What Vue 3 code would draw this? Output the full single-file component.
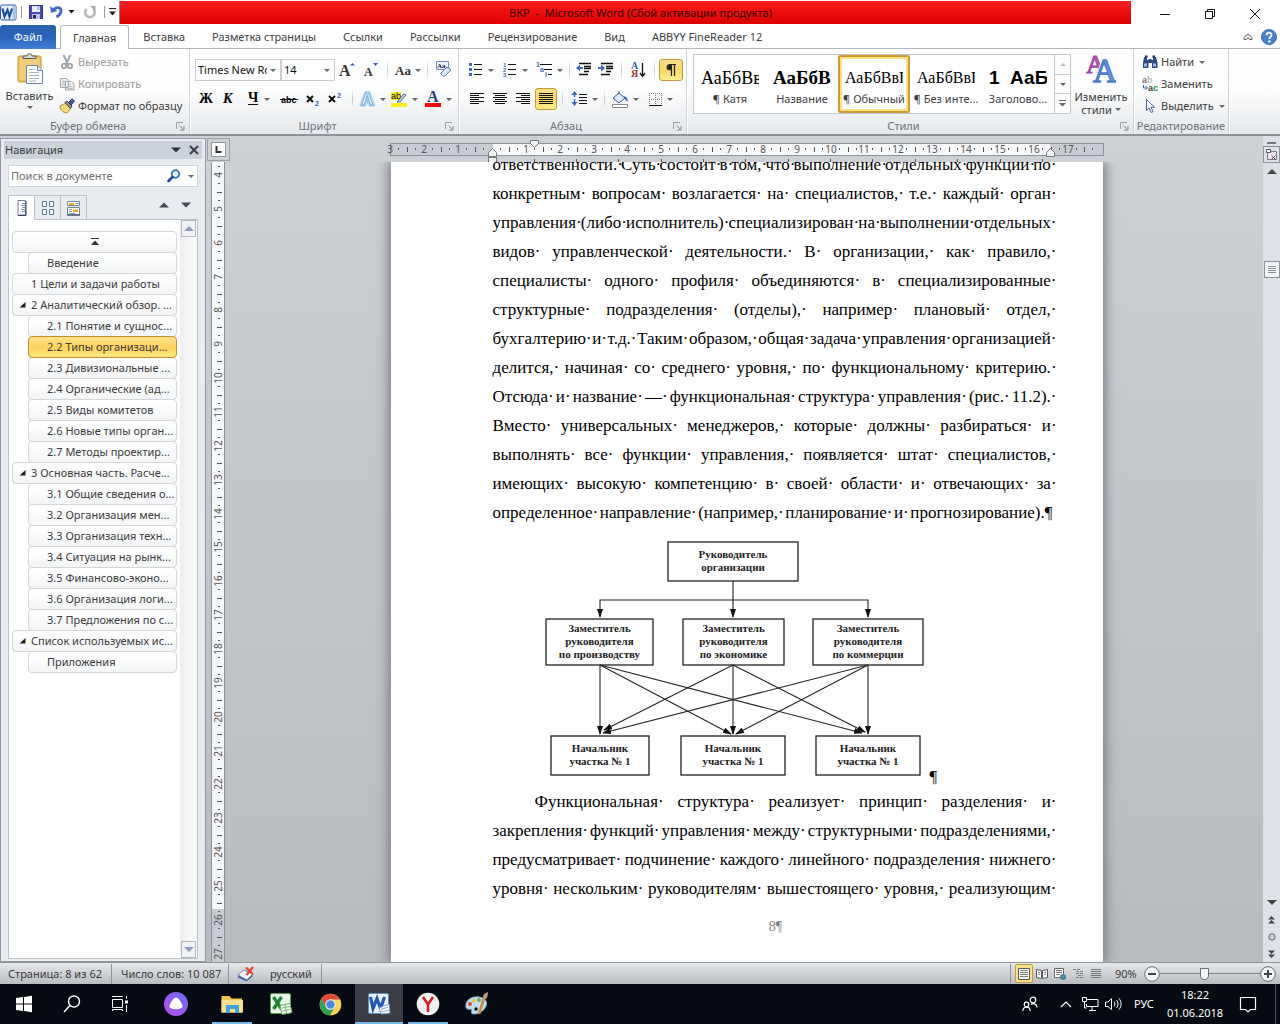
<template>
  <div class="word">
    <header class="titlebar">
      <div class="quick">
        <svg width="17" height="17" viewBox="0 0 17 17" v-html="icons.word"></svg>
        <i class="quick-sep"></i>
        <button aria-label="Сохранить"><svg width="14" height="14" viewBox="0 0 14 14" v-html="icons.save"></svg></button>
        <button class="undo" aria-label="Отменить"><svg width="26" height="14" viewBox="0 0 26 14" v-html="icons.undo"></svg></button>
        <button aria-label="Повторить"><svg width="14" height="14" viewBox="0 0 14 14" v-html="icons.redo"></svg></button>
        <i class="quick-sep end"></i>
        <button aria-label="Настройка"><svg width="7" height="8" viewBox="0 0 7 8"><path d="M0 .5h7" stroke="#222" /><path d="M0 3.500h7L3.500 7.500z" fill="#222" /></svg></button>
      </div>
      <div class="caption">ВКР&nbsp; -&nbsp; Microsoft Word (Сбой активации продукта)</div>
      <div class="window-buttons">
        <button aria-label="Свернуть"><svg width="12" height="12" viewBox="0 0 12 12"><path d="M1 6.500h10" stroke="#111" /></svg></button>
        <button aria-label="Восстановить"><svg width="12" height="12" viewBox="0 0 12 12"><path d="M1.500 3.500h7v7h-7zM3.500 3.500v-2h7v7h-2" fill="none" stroke="#111" /></svg></button>
        <button aria-label="Закрыть"><svg width="12" height="12" viewBox="0 0 12 12"><path d="M1 1l10 10M11 1L1 11" stroke="#111" /></svg></button>
      </div>
    </header>

    <nav class="tabs">
      <button class="file-tab">Файл</button>
      <button
        v-for="tab in tabs"
        :key="tab"
        class="tab"
        :class="{ current: tab === currentTab }"
        @click="currentTab = tab"
      >{{ tab }}</button>
      <span class="tabs-fill"></span>
      <button class="help" aria-label="Свернуть ленту"><svg width="10" height="8" viewBox="0 0 10 8"><path d="M1 4.500L5 1l4 3.500v2H7L5 5 3 6.500H1z" fill="#fff" stroke="#555" /></svg></button>
      <button class="help" aria-label="Справка"><svg width="16" height="16" viewBox="0 0 16 16"><circle cx="8" cy="8" r="7.500" fill="#4a80d0" stroke="#3a6cba" /><path d="M5.500 6.200c0-3.600 5.200-3.200 5 0C10.400 8 8.300 8 8.300 10" fill="none" stroke="#fff" stroke-width="1.800" /><circle cx="8.300" cy="12.400" r="1.200" fill="#fff" /></svg></button>
    </nav>

    <section class="ribbon">
      <div class="group clipboard">
        <div class="group-body">
          <button class="big paste">
            <svg width="28" height="32" viewBox="0 0 28 32" v-html="icons.paste"></svg>
            <span>Вставить</span>
            <span class="arrow"></span>
          </button>
          <div class="stack">
            <button class="off"><svg width="16" height="16" viewBox="0 0 16 16" v-html="icons.cut"></svg>Вырезать</button>
            <button class="off"><svg width="16" height="16" viewBox="0 0 16 16" v-html="icons.copy"></svg>Копировать</button>
            <button><svg width="16" height="16" viewBox="0 0 16 16" v-html="icons.brush"></svg>Формат по образцу</button>
          </div>
        </div>
        <div class="group-name"><span>Буфер обмена</span><svg width="9" height="9" viewBox="0 0 9 9" v-html="icons.launcher"></svg></div>
      </div>

      <div class="group font">
        <div class="group-body rows">
          <div class="row">
            <span class="combo family"><select aria-label="Шрифт"><option>Times New Roman</option></select><span class="arrow"></span></span>
            <span class="combo size"><select aria-label="Размер шрифта"><option>14</option></select><span class="arrow"></span></span>
            <ToolRow :items="fontTop" />
          </div>
          <div class="row"><ToolRow :items="fontBottom" /></div>
        </div>
        <div class="group-name"><span>Шрифт</span><svg width="9" height="9" viewBox="0 0 9 9" v-html="icons.launcher"></svg></div>
      </div>

      <div class="group paragraph">
        <div class="group-body rows">
          <div class="row"><ToolRow :items="paraTop" /></div>
          <div class="row"><ToolRow :items="paraBottom" /></div>
        </div>
        <div class="group-name"><span>Абзац</span><svg width="9" height="9" viewBox="0 0 9 9" v-html="icons.launcher"></svg></div>
      </div>

      <div class="group styles">
        <div class="group-body">
          <div class="gallery">
            <button v-for="s in styles" :key="s.name" class="style" :class="[s.kind, { picked: s.picked }]">
              <span class="sample">{{ s.sample }}</span>
              <span class="style-name">{{ s.name }}</span>
            </button>
            <div class="gallery-scroll">
              <button aria-label="Вверх"><span class="arrow up pale"></span></button>
              <button aria-label="Вниз"><span class="arrow"></span></button>
              <button aria-label="Все стили"><svg width="7" height="7" viewBox="0 0 7 7"><path d="M0 .5h7" stroke="#666" /><path d="M0 3h7L3.500 6.500z" fill="#666" /></svg></button>
            </div>
          </div>
          <button class="big change">
            <svg width="30" height="30" viewBox="0 0 30 30" v-html="icons.change"></svg>
            <span>Изменить</span>
            <span class="with-arrow">стили <span class="arrow"></span></span>
          </button>
        </div>
        <div class="group-name"><span>Стили</span><svg width="9" height="9" viewBox="0 0 9 9" v-html="icons.launcher"></svg></div>
      </div>

      <div class="group editing">
        <div class="group-body">
          <div class="stack">
            <button><svg width="16" height="16" viewBox="0 0 16 16" v-html="icons.find"></svg>Найти<span class="arrow"></span></button>
            <button><svg width="16" height="16" viewBox="0 0 16 16" v-html="icons.replace"></svg>Заменить</button>
            <button><svg width="16" height="16" viewBox="0 0 16 16" v-html="icons.select"></svg>Выделить<span class="arrow"></span></button>
          </div>
        </div>
        <div class="group-name"><span>Редактирование</span></div>
      </div>
    </section>

    <main class="workspace">
      <aside class="navigation">
        <div class="nav-title">
          <span>Навигация</span>
          <svg width="30" height="10" viewBox="0 0 30 10"><path d="M1 2.500h10L6 7.500z" fill="#333" /><path d="M20 1l8 8M28 1l-8 8" stroke="#444" stroke-width="2.200" /></svg>
        </div>
        <div class="search">
          <input type="text" placeholder="Поиск в документе" aria-label="Поиск в документе" />
          <svg width="14" height="14" viewBox="0 0 14 14"><circle cx="8.500" cy="5" r="3.800" fill="#e4f1fb" stroke="#2f74bd" stroke-width="1.800" /><path d="M5.500 8L1.500 12" stroke="#224f93" stroke-width="2.600" stroke-linecap="round" /></svg>
          <span class="arrow"></span>
        </div>
        <div class="nav-tabs">
          <button class="active" aria-label="Заголовки"><svg width="12" height="16" viewBox="0 0 12 16"><path d="M2 .5h7.500v14.500H2z" fill="#fff" stroke="#6a7f9f" /><path d="M10 1v14.500H2" stroke="#2f4468" fill="none" /><path d="M6 3.500h3M5 5.500h4M6 7.500h3M5 9.500h4M6 11.500h3" stroke="#8894a6" /></svg></button>
          <button aria-label="Страницы"><svg width="14" height="16" viewBox="0 0 14 16"><path d="M1.500 1.500h4v5h-4zM8.500 1.500h4v5h-4zM1.500 9.500h4v5h-4zM8.500 9.500h4v5h-4z" fill="#fff" stroke="#56749c" /></svg></button>
          <button aria-label="Результаты"><svg width="14" height="16" viewBox="0 0 14 16"><path d="M.5 1.500h12v4H.5zM.5 7.500h12v7H.5z" fill="#fff" stroke="#7286a5" /><path d="M2 3h5v2H2zM6 9.500h5V12H6z" fill="#efa91c" /><path d="M8 3.500h4M2 9.500h3M2 11.500h3M2 13.500h6" stroke="#8b9ab2" /><path d="M0 15.200h13" stroke="#2f4468" /></svg></button>
          <span class="nav-arrows"><svg width="34" height="8" viewBox="0 0 34 8"><path d="M1 6.500h10L6 1.500zM23 1.500h10L28 6.500z" fill="#444b55" /></svg></span>
        </div>
        <div class="nav-list">
          <ul>
            <li class="outline top"><svg width="8" height="8" viewBox="0 0 8 8"><path d="M0 .5h8" stroke="#333" /><path d="M0 7h8L4 2.500z" fill="#333" /></svg></li>
            <li
              v-for="h in headings"
              :key="h.text"
              class="outline"
              :class="{ sub: h.level === 2, here: h.here }"
            >
              <span class="toggle"><svg v-if="h.open" width="7" height="6" viewBox="0 0 7 6"><path d="M6.500 0v5.500H.5z" fill="#222" /></svg></span>
              <span>{{ h.text }}</span>
            </li>
          </ul>
          <div class="nav-scroll">
            <button aria-label="Вверх"><span class="arrow up blue"></span></button>
            <button aria-label="Вниз"><span class="arrow blue"></span></button>
          </div>
        </div>
      </aside>

      <div class="vruler">
        <div class="tab-kind"><svg width="15" height="15" viewBox="0 0 15 15"><path d="M.5.5h14v14H.5z" fill="#fff" stroke="#8c9299" /><path d="M5.500 4v6h5" fill="none" stroke="#333" stroke-width="2" /></svg></div>
        <div class="vscale">
          <svg width="12" height="800" viewBox="0 0 12 800">
            <rect y="747" width="12" height="53" fill="#c8ccd2" />
            <g v-for="n in 24" :key="n">
              <text :transform="`translate(10 ${vpos(n)}) rotate(-90)`" text-anchor="middle">{{ n + 3 }}</text>
              <path :d="`M6 ${vpos(n) + 8.5}h2M5 ${vpos(n) + 17.5}h5M6 ${vpos(n) + 25.5}h2`" />
            </g>
            <path d="M6 4.500h2" />
          </svg>
        </div>
      </div>

      <div class="document">
        <div class="hruler">
          <svg width="714" height="26" viewBox="0 0 714 26">
            <rect x=".5" y="7.500" width="713" height="12" fill="#c8ccd2" stroke="#8c9299" />
            <rect x="103" y="8" width="557" height="11" fill="#f6f7f8" />
            <g v-for="n in marks" :key="n">
              <text v-if="n" :x="hpos(n)" y="17" text-anchor="middle">{{ Math.abs(n) }}</text>
              <path v-if="n < 17" :d="`M${hpos(n) + 8.5} 12v2M${hpos(n) + 17.5} 11v5M${hpos(n) + 25.5} 12v2`" />
            </g>
            <path d="M686.500 12v2M694.500 11v5M702.500 12v2M144.500 23v3M186.500 23v3M228.500 23v3M271.500 23v3M313.500 23v3M355.500 23v3M398.500 23v3M440.500 23v3M482.500 23v3M525.500 23v3M567.500 23v3M610.500 23v3M652.500 23v3" />
            <path class="marker" d="M140.500 4.500h8v3l-4 4-4-4z" />
            <path class="marker" d="M98.500 20.500v-4l4-4 4 4v4zM98.500 21.500h8v5h-8z" />
            <path class="marker" d="M656.500 20.500v-4l4-4 4 4v4z" />
          </svg>
        </div>
        <div class="viewport">
          <article class="page">
            <p class="para">
              <span v-for="(line, i) in firstPara" :key="i" class="line" :class="{ last: i === firstPara.length - 1 }">
                <span v-for="(part, k) in parts(line)" :key="k" :class="part === '·' ? 'dot' : 'run'">{{ part }}</span>
              </span>
            </p>
            <div class="figure">
              <svg width="400" height="254" viewBox="0 0 400 254">
                <defs>
                  <marker id="head" markerWidth="9" markerHeight="6" refX="8" refY="3" orient="auto" markerUnits="userSpaceOnUse"><path d="M0 0l9 3-9 3z" fill="#111" /></marker>
                </defs>
                <g v-for="(b, i) in boxes" :key="i">
                  <rect :x="b.x" :y="b.y" :width="b.w" :height="b.h" fill="none" stroke="#222" stroke-width="1.300" />
                  <text v-for="(t, k) in b.text" :key="k" :x="b.x + b.w / 2" :y="b.y + b.first + k * 13" text-anchor="middle">{{ t }}</text>
                </g>
                <g fill="none" stroke="#222" stroke-width="1.100">
                  <path v-for="(d, i) in arrows" :key="i" :d="d" marker-end="url(#head)" />
                </g>
              </svg>
              <span class="pilcrow">¶</span>
            </div>
            <p class="para">
              <span v-for="(line, i) in secondPara" :key="i" class="line" :class="{ indent: i === 0 }">
                <span v-for="(part, k) in parts(line)" :key="k" :class="part === '·' ? 'dot' : 'run'">{{ part }}</span>
              </span>
            </p>
            <div class="page-number">8¶</div>
          </article>
        </div>
      </div>

      <div class="vscroll">
        <i class="split"></i>
        <button class="ruler-toggle" aria-label="Линейка"><svg width="13" height="13" viewBox="0 0 13 13"><path d="M2.500 3.500h9v8h-9z" fill="#f1e3ee" stroke="#777d84" /><path d="M1.500 1.500h4v3h-4zM6.500 7.500l4 4M10.500 7.500l-4 4" fill="#fff" stroke="#555" /></svg></button>
        <button class="step" aria-label="Вверх"><span class="arrow up dark"></span></button>
        <div class="track"><i class="thumb"></i></div>
        <button class="step" aria-label="Вниз"><span class="arrow dark"></span></button>
        <button class="browse" aria-label="Предыдущая"><svg width="7" height="8" viewBox="0 0 7 8"><path d="M0 3.500L3.500 0 7 3.500zM0 7.500L3.500 4 7 7.500z" fill="#444" /></svg></button>
        <button class="browse" aria-label="Выбор объекта"><svg width="8" height="8" viewBox="0 0 8 8"><circle cx="4" cy="4" r="3.200" fill="#ccd1d7" stroke="#666" /></svg></button>
        <button class="browse" aria-label="Следующая"><svg width="7" height="8" viewBox="0 0 7 8"><path d="M0 .5h7L3.500 4zM0 4.500h7L3.500 8z" fill="#444" /></svg></button>
      </div>
    </main>

    <footer class="status">
      <span class="cell pages">Страница: 8 из 62</span>
      <span class="cell count">Число слов: 10 087</span>
      <span class="cell language">
        <svg width="18" height="16" viewBox="0 0 18 16"><path d="M1 9l6-5 9 4-6 6z" fill="#fff" stroke="#5d7fb8" /><path d="M1 9.500l8.500 4.500 6-5.500v2L9.500 15.500 1 11.500z" fill="#3d64ad" /><path d="M9 1.500l7 7M16 1L9.500 9" stroke="#e8432a" stroke-width="2.200" /></svg>
        русский
      </span>
      <span class="status-fill"></span>
      <div class="views">
        <button v-for="(v, i) in views" :key="i" :class="{ on: i === 0 }" :aria-label="v.label"><svg width="12" height="12" viewBox="0 0 12 12" v-html="v.body"></svg></button>
      </div>
      <span class="percent">90%</span>
      <button class="zoom-button" aria-label="Уменьшить"><svg width="16" height="16" viewBox="0 0 16 16"><circle cx="8" cy="8" r="7.300" fill="#f4f5f6" stroke="#666c74" /><path d="M4 8h8" stroke="#444" stroke-width="2" /></svg></button>
      <input v-model="zoom" class="zoom" type="range" min="0" max="100" aria-label="Масштаб" />
      <button class="zoom-button" aria-label="Увеличить"><svg width="16" height="16" viewBox="0 0 16 16"><circle cx="8" cy="8" r="7.300" fill="#f4f5f6" stroke="#666c74" /><path d="M4 8h8M8 4v8" stroke="#444" stroke-width="2" /></svg></button>
    </footer>

    <div class="taskbar">
      <button v-for="a in apps" :key="a.label" :class="['app', a.state, a.kind]" :aria-label="a.label">
        <svg width="24" height="24" viewBox="0 0 24 24" v-html="a.body"></svg>
      </button>
      <span class="task-fill"></span>
      <button class="tray people" aria-label="Люди"><svg width="16" height="16" viewBox="0 0 16 16" fill="none" stroke="#fff" stroke-width="1.200"><circle cx="11" cy="4" r="2.800" /><circle cx="4.500" cy="8.500" r="2.300" /><path d="M.8 15c0-5 7.400-5 7.400 0M9 8.500c3-2 6 0 6 3" /></svg></button>
      <button class="tray" aria-label="Скрытые значки"><svg width="12" height="8" viewBox="0 0 12 8"><path d="M1 7l5-5 5 5" fill="none" stroke="#fff" stroke-width="1.200" /></svg></button>
      <button class="tray" aria-label="Сеть"><svg width="17" height="14" viewBox="0 0 17 14"><path d="M5 2.500h11v7H4.500V7M10 10v3M7 13.500h7M.5.500h4v4h-4zM2.500 5v6h2" fill="none" stroke="#fff" /></svg></button>
      <button class="tray" aria-label="Громкость"><svg width="18" height="14" viewBox="0 0 18 14"><path d="M.5 5h2.500L6.500 1.500v11L3 9.500H.5zM9 4.500c1.300 1.500 1.300 3.500 0 5M11.500 3c2 2.500 2 5.500 0 8M14 1.500c2.800 3.500 2.800 7.500 0 11" fill="none" stroke="#fff" /></svg></button>
      <span class="lang">РУС</span>
      <span class="clock"><span>18:22</span><span>01.06.2018</span></span>
      <button class="tray notes" aria-label="Уведомления"><svg width="18" height="17" viewBox="0 0 18 17"><path d="M1.500 1.500h15v12h-5l-2.500 2.500L6.500 13.500h-5z" fill="none" stroke="#fff" stroke-width="1.200" /></svg></button>
      <i class="peek"></i>
    </div>
  </div>
</template>

<script setup>
import { h, ref } from 'vue'

const tabs = ['Главная', 'Вставка', 'Разметка страницы', 'Ссылки', 'Рассылки', 'Рецензирование', 'Вид', 'ABBYY FineReader 12']
const currentTab = ref('Главная')
const zoom = ref(44)

const icons = {
  word: '<rect x=".5" y="1" width="15.500" height="15" rx="1.500" fill="#e9f1fb" stroke="#2a5ca8"/><path d="M12.500 2H16v13h-3.500z" fill="#a9c6ea"/><path d="M2.500 4.500l2 8L7.500 6l2 6.500 2.500-8" fill="none" stroke="#1c509f" stroke-width="2.200"/>',
  save: '<path d="M.5.500h13v13h-13z" fill="#4a4cb5" stroke="#30318c"/><path d="M3 1h8v6H3z" fill="#e7ecfa"/><path d="M8.500 1h2v4h-2z" fill="#9ab2e5"/><path d="M3 9h8v5H3z" fill="#b9c4ea"/><path d="M4 10h3v3.500H4z" fill="#252771"/>',
  undo: '<path d="M0 1l1 7 6.500-2z" fill="#4a76d4"/><path d="M3 5.500C6 1 11.500 2 11 6.500c-.4 2.500-2 4-4.500 5.500" fill="none" stroke="#3e68c6" stroke-width="2.800"/><path d="M18.500 5h6l-3 3.500z" fill="#111"/>',
  redo: '<path d="M3.500 4C.500 8 3 12 7 12c4.500 0 6-5 3.500-8" fill="none" stroke="#b5b7bb" stroke-width="2.600"/><path d="M7 1h5.500v5.500z" fill="#a9abb0"/>',
  launcher: '<path d="M.5 7V.500H7" fill="none" stroke="#999fa8"/><path d="M3.500 3.500L7 7M4 8h4V4" fill="none" stroke="#7f858f"/>',
  paste: '<rect x="2" y="3" width="23" height="26" rx="1.500" fill="#efc062" stroke="#c8933a"/><rect x="3.500" y="5" width="20" height="22" fill="#f4cd7b"/><path d="M7 5.500V3h4c0-3 5-3 5 0h4v2.500z" fill="#d8dbe0" stroke="#555"/><path d="M10.500 12.500h11l5 5v13h-16z" fill="#fff" stroke="#6b83a9"/><path d="M21.500 12.500v5h5" fill="#dfe8f5" stroke="#6b83a9"/><path d="M13 16.500h6M13 19.500h10M13 22.500h10M13 25.500h10M13 28h7" stroke="#a5b1c4"/>',
  cut: '<path d="M4.500 1l4.500 9M11.500 1L7 10" stroke="#a2a5aa" stroke-width="2"/><circle cx="5" cy="12" r="2.200" fill="none" stroke="#8f9297" stroke-width="1.500"/><circle cx="11" cy="12" r="2.200" fill="none" stroke="#8f9297" stroke-width="1.500"/>',
  copy: '<path d="M1.500 2.500h6l2 2v7h-8zM6.500 5.500h6l2.500 2.500v6h-8.500z" fill="#f1f1f1" stroke="#a1a3a6"/><path d="M3 5h3M3 7h3M3 9h3M8.500 8.500h3M8.500 10.500h5M8.500 12.500h5" stroke="#b5b7b9"/>',
  brush: '<path d="M1 8l6-3 5 5-4 5C5 14.500 4 14 3.500 13 2 12 1 10.500 1 8z" fill="#f3da7a" stroke="#a98a3a"/><path d="M6 4.500L8 3l5 5-1.500 2.500z" fill="#8d9096" stroke="#444"/><path d="M9.500 4.500L13 .8 15.500 3 12 7z" fill="#4b5c9b" stroke="#29346a"/>',
  change: '<g font-family="Liberation Serif, serif"><text x="0" y="19" font-size="26" fill="#c05cc4" stroke="#a548aa" stroke-width="1.200">A</text><text x="7" y="28" font-size="33" fill="#6a9be4" stroke="#fff" stroke-width="3">A</text><text x="7" y="28" font-size="33" fill="#6a9be4" stroke="#4a7cca" stroke-width="1.400">A</text></g>',
  find: '<path d="M2 3h3v3h1.500V5h3v1H11V3h3l1.500 6v5H10V9H6.500v5H1V9z" fill="#2c4a86"/><path d="M2 9.500h3v3H2zM11 9.500h3v3h-3z" fill="#a3bbe3"/><path d="M3 1.500h2.500v2H3zM10.500 1.500H13v2h-2.500z" fill="#17305f"/>',
  replace: '<g font-family="Liberation Sans, sans-serif" font-weight="bold" font-size="9"><text x="0" y="7" fill="#777">a<tspan fill="#bbb">b</tspan></text><text x="6" y="15" fill="#444">a<tspan fill="#1e9a2a">c</tspan></text></g><path d="M1.500 9v3h3M3.500 10l2 2-2 2" fill="none" stroke="#2f5fb0"/>',
  select: '<path d="M4.500 1.500v11l2.700-2.500 2 4.500 1.800-.8-2-4.400h3.500z" fill="#fff" stroke="#4a6496"/>'
}

const serif = (x, y, size, text, extra = '') =>
  `<text x="${x}" y="${y}" font-family="Liberation Serif, serif" font-weight="bold" font-size="${size}" ${extra}>${text}</text>`

// w — ширина кнопки, iw — ширина значка
const fontTop = [
  { w: 24, iw: 18, label: 'Увеличить', body: serif(1, 15, 16, 'A', 'fill="#333"') + '<path d="M12 4.500h5L14.500 2z" fill="#2f5fb0"/>' },
  { w: 22, iw: 16, label: 'Уменьшить', body: serif(2, 15, 12, 'A', 'fill="#333"') + '<path d="M11 2h5l-2.500 3z" fill="#2f5fb0"/>' },
  { sep: 12 },
  { w: 28, iw: 17, arrow: true, label: 'Регистр', body: serif(1, 14, 13, 'Aa', 'fill="#333"') },
  { sep: 12 },
  { w: 22, iw: 16, label: 'Очистить', body: '<path d="M.5.500h12v8H.5z" fill="#eef3fb" stroke="#6e8dc0"/>' + serif(1, 7, 7, 'Aa', 'fill="#223"') + '<path d="M5 12l6-6 4 3-6 6c-2 1-4-1-4-3z" fill="#dbe5f5" stroke="#5d7cb0"/>' }
]

const fontBottom = [
  { w: 22, iw: 14, label: 'Полужирный', body: serif(0, 13, 14, 'Ж') },
  { w: 22, iw: 14, label: 'Курсив', body: serif(2, 13, 14, 'К', 'font-style="italic"') },
  { w: 37, iw: 14, arrow: true, label: 'Подчеркнутый', body: serif(2, 12, 14, 'Ч') + '<path d="M2 14.500h10" stroke="#111"/>' },
  { w: 26, iw: 18, label: 'Зачеркнутый', body: '<text x="1" y="13" font-family="Liberation Sans, sans-serif" font-weight="bold" font-size="9">abc</text><path d="M0 9.500h18" stroke="#111"/>' },
  { w: 22, iw: 14, label: 'Подстрочный', body: '<path d="M1 6l6 6M7 6l-6 6" stroke="#111" stroke-width="2"/><text x="9" y="16" font-size="7" font-family="Liberation Sans, sans-serif" fill="#2f5fb0" font-weight="bold">2</text>' },
  { w: 22, iw: 14, label: 'Надстрочный', body: '<path d="M1 6l6 6M7 6l-6 6" stroke="#111" stroke-width="2"/><text x="9" y="8" font-size="7" font-family="Liberation Sans, sans-serif" fill="#2f5fb0" font-weight="bold">2</text>' },
  { sep: 12 },
  { w: 29, iw: 17, arrow: true, label: 'Эффекты', body: '<text x="2" y="15" font-family="Liberation Sans, sans-serif" font-weight="bold" font-size="17" fill="#fff" stroke="#b5dcf5" stroke-width="4" stroke-linejoin="round">A</text><text x="2" y="15" font-family="Liberation Sans, sans-serif" font-weight="bold" font-size="17" fill="#fff" stroke="#6fb0e0">A</text>' },
  { w: 34, iw: 18, arrow: true, label: 'Цвет выделения', body: '<path d="M1 2h10v8H1zM1 13h16v4H1z" fill="#ffef1f"/><text x="1" y="9" font-family="Liberation Sans, sans-serif" font-size="9">ab</text><path d="M7 12l7-8 2 1-6 7z" fill="#cdd9ef" stroke="#45679f"/>' },
  { w: 34, iw: 18, arrow: true, label: 'Цвет текста', body: serif(3, 12, 16, 'A', 'fill="#24407f"') + '<path d="M1 13h16v4H1z" fill="#f00"/>' }
]

const bullet = '<path d="M1 3.500h3M1 8.500h3M1 13.500h3" stroke="#3f68b8" stroke-width="3"/><path d="M6 3.500h8M6 8.500h8M6 13.500h8" stroke="#111"/>'
const numbers = '<path d="M6 3.500h8M6 8.500h8M6 13.500h8" stroke="#111"/><g font-family="Liberation Sans, sans-serif" font-size="6" font-weight="bold" fill="#3f68b8"><text x="1" y="5.500">1</text><text x="1" y="10.500">2</text><text x="1" y="15.500">3</text></g>'
const multi = '<path d="M4 3.500h12M8 8.500h8M12 13.500h4" stroke="#111"/><g font-family="Liberation Sans, sans-serif" font-size="7" font-weight="bold" fill="#3f68b8"><text x="0" y="6">1</text><text x="4" y="11">a</text><text x="9" y="16">i</text></g>'
const shift = (tip) => `<path d="M3 2.500h12M8 5.500h7M8 7.500h7M8 10.500h5M3 13.500h9" stroke="#111" stroke-width="1.500"/><path d="${tip}" fill="#3f68b8"/>`

const paraTop = [
  { w: 34, iw: 16, arrow: true, label: 'Маркеры', body: bullet },
  { w: 34, iw: 16, arrow: true, label: 'Нумерация', body: numbers },
  { w: 34, iw: 17, arrow: true, label: 'Многоуровневый список', body: multi },
  { sep: 6 },
  { w: 23, iw: 16, label: 'Уменьшить отступ', body: shift('M0 7l4-3.500v2.500h3v2H4v2.500z') },
  { w: 21, iw: 16, label: 'Увеличить отступ', body: shift('M7 7L3 3.500v2.500H0v2h3v2.500z') },
  { sep: 11 },
  { w: 22, iw: 16, label: 'Сортировка', body: '<g font-family="Liberation Serif, serif" font-weight="bold" font-size="10"><text x="1" y="8" fill="#2f5fb0">А</text><text x="1" y="16" fill="#9a3a3a">Я</text></g><path d="M12.500 2v13" stroke="#111" stroke-width="1.300"/><path d="M10 12l2.500 3.500L15 12" fill="none" stroke="#111" stroke-width="1.300"/>' },
  { sep: 10 },
  { w: 24, iw: 12, on: true, label: 'Отобразить все знаки', body: '<path d="M5.500 9C1 9 1 3.500 5 3.500h6M6.500 4v11M9.500 4v11" fill="none" stroke="#222" stroke-width="1.200"/><path d="M6.500 9C1.500 9 1.500 3.500 6.500 3.500z" fill="#222"/>' }
]

// строки значка выравнивания: [отступ, длина]
const align = (rows) =>
  `<path d="${rows.map(([x, w], i) => `M${1 + x} ${3.5 + i * 2}h${w}`).join('')}" stroke="#111"/>`
const paraBottom = [
  { w: 25, iw: 16, label: 'По левому краю', body: align([[0, 14], [0, 9], [0, 14], [0, 9], [0, 14], [0, 9]]) },
  { w: 22, iw: 16, label: 'По центру', body: align([[0, 14], [2, 10], [0, 14], [2, 10], [0, 14], [2, 10]]) },
  { w: 24, iw: 16, label: 'По правому краю', body: align([[0, 14], [5, 9], [0, 14], [5, 9], [0, 14], [5, 9]]) },
  { w: 22, iw: 16, on: true, label: 'По ширине', body: align([[0, 14], [0, 14], [0, 14], [0, 14], [0, 14], [0, 14]]) },
  { sep: 10 },
  { w: 34, iw: 17, arrow: true, label: 'Интервал', body: '<path d="M8 4.500h8M8 7.500h8M8 10.500h8M8 13.500h8" stroke="#111"/><path d="M3.500 4v9" stroke="#3f68b8" stroke-width="1.500" stroke-dasharray="3 2"/><path d="M.5 5l3-4 3 4zM.5 12l3 4 3-4z" fill="#3f68b8"/>' },
  { sep: 6 },
  { w: 36, iw: 18, arrow: true, label: 'Заливка', body: '<path d="M2 8l6-5 6 5-6 5z" fill="#dfe8f6" stroke="#36558f"/><path d="M8 3V1" stroke="#36558f"/><path d="M13 6c3 1 4 3 3.500 6L14 9z" fill="#2f5fb0"/><path d="M1.500 14.500h15v3h-15z" fill="#fff" stroke="#888"/>' },
  { w: 34, iw: 16, arrow: true, label: 'Границы', body: '<path d="M2.500 3v11M8.500 3v11M14.500 3v11M2 3.500h13M2 9.500h13" stroke="#777" stroke-dasharray="1 1"/><path d="M2 15.500h13" stroke="#111"/>' }
]

// ряд кнопок ленты
const ToolRow = (props) =>
  props.items.map((t) =>
    t.sep
      ? h('span', { class: 'tool-sep', style: { width: t.sep + 'px' } })
      : h('button', { class: ['tool', { on: t.on }], style: { width: t.w + 'px' }, 'aria-label': t.label }, [
          h('svg', { width: t.iw, height: 18, viewBox: `0 0 ${t.iw} 18`, innerHTML: t.body }),
          t.arrow ? h('span', { class: 'arrow' }) : null
        ])
  )
ToolRow.props = ['items']

const styles = [
  { name: '¶ Катя', sample: 'АаБбВв', kind: 'large' },
  { name: 'Название', sample: 'АаБбВ', kind: 'bold' },
  { name: '¶ Обычный', sample: 'АаБбВвГ', kind: 'plain', picked: true },
  { name: '¶ Без инте...', sample: 'АаБбВвГ', kind: 'plain' },
  { name: 'Заголово...', sample: '1\u00a0 АаБ', kind: 'heading' }
]

const headings = [
  { text: 'Введение', level: 2 },
  { text: '1 Цели и задачи работы', level: 1 },
  { text: '2 Аналитический обзор. ...', level: 1, open: true },
  { text: '2.1 Понятие и сущнос...', level: 2 },
  { text: '2.2 Типы организаци...', level: 2, here: true },
  { text: '2.3 Дивизиональные ...', level: 2 },
  { text: '2.4 Органические (ад...', level: 2 },
  { text: '2.5 Виды комитетов', level: 2 },
  { text: '2.6 Новые типы орган...', level: 2 },
  { text: '2.7 Методы проектир...', level: 2 },
  { text: '3 Основная часть. Расче...', level: 1, open: true },
  { text: '3.1 Общие сведения о...', level: 2 },
  { text: '3.2 Организация мен...', level: 2 },
  { text: '3.3 Организация техн...', level: 2 },
  { text: '3.4 Ситуация на рынк...', level: 2 },
  { text: '3.5 Финансово-эконо...', level: 2 },
  { text: '3.6 Организация логи...', level: 2 },
  { text: '3.7 Предложения по с...', level: 2 },
  { text: 'Список используемых ис...', level: 1, open: true },
  { text: 'Приложения', level: 2 }
]

const firstPara = [
  'ответственности. Суть состоит в том, что выполнение отдельных функций по ',
  'конкретным вопросам возлагается на специалистов, т.е. каждый орган ',
  'управления (либо исполнитель) специализирован на выполнении отдельных ',
  'видов управленческой деятельности. В организации, как правило, ',
  'специалисты одного профиля объединяются в специализированные ',
  'структурные подразделения (отделы), например плановый отдел, ',
  'бухгалтерию и т.д. Таким образом, общая задача управления организацией ',
  'делится, начиная со среднего уровня, по функциональному критерию. ',
  'Отсюда и название — функциональная структура управления (рис. 11.2). ',
  'Вместо универсальных менеджеров, которые должны разбираться и ',
  'выполнять все функции управления, появляется штат специалистов, ',
  'имеющих высокую компетенцию в своей области и отвечающих за ',
  'определенное направление (например, планирование и прогнозирование).¶'
]
const secondPara = [
  'Функциональная структура реализует принцип разделения и ',
  'закрепления функций управления между структурными подразделениями, ',
  'предусматривает подчинение каждого линейного подразделения нижнего ',
  'уровня нескольким руководителям вышестоящего уровня, реализующим '
]
// пробелы показываем точками
const parts = (line) => line.replace(/ /g, ' · ').split(' ').filter(Boolean)

// сантиметр линейки при масштабе 90%
const CM = 33.86
const marks = Array.from({ length: 21 }, (_, i) => i - 3)
const hpos = (n) => Math.round(102 + n * CM)
const vpos = (n) => Math.round(13 + (n - 1) * CM)

const boxes = [
  { x: 138, y: 12, w: 130, h: 39, first: 16, text: ['Руководитель', 'организации'] },
  { x: 16, y: 89, w: 107, h: 46, first: 13, text: ['Заместитель', 'руководителя', 'по производству'] },
  { x: 153, y: 89, w: 101, h: 46, first: 13, text: ['Заместитель', 'руководителя', 'по экономике'] },
  { x: 283, y: 89, w: 110, h: 46, first: 13, text: ['Заместитель', 'руководителя', 'по коммерции'] },
  { x: 21, y: 206, w: 98, h: 39, first: 16, text: ['Начальник', 'участка № 1'] },
  { x: 151, y: 206, w: 104, h: 39, first: 16, text: ['Начальник', 'участка № 1'] },
  { x: 286, y: 206, w: 104, h: 39, first: 16, text: ['Начальник', 'участка № 1'] }
]
const arrows = [
  'M203 51v36', 'M203 70H70v17', 'M203 70h135v17',
  'M70 135v69', 'M70 135l131 69', 'M70 135l262 68',
  'M203 135L74 200', 'M203 135v69', 'M203 135l132 67',
  'M338 135L73 203', 'M338 135L206 204', 'M338 135v69'
]

const views = [
  { label: 'Разметка страницы', body: '<path d="M.5.500h11v11H.5z" fill="#fff" stroke="#555"/><path d="M2 2.500h8M2 4.500h8M2 6.500h8M2 8.500h8" stroke="#777"/>' },
  { label: 'Режим чтения', body: '<path d="M.5 1.500l5 1v8l-5-1zM11.500 1.500l-5 1v8l5-1z" fill="#fff" stroke="#555"/><path d="M2 4l2 .5M2 6l2 .5M8 4.500l2-.5M8 6.500l2-.5" stroke="#777"/>' },
  { label: 'Веб-документ', body: '<path d="M.5.500h9v9h-9z" fill="#fff" stroke="#666"/><path d="M2 2.500h6M2 4.500h6M2 6.500h4" stroke="#777"/><circle cx="9" cy="9" r="3" fill="#3f7fae"/><path d="M8 7.500h2v2H8z" fill="#5fae57"/>' },
  { label: 'Структура', body: '<path d="M1 1.500h8M4 3.500h7M4 5.500h7M6 7.500h5M4 9.500h7" stroke="#777" stroke-dasharray="3 1"/>' },
  { label: 'Черновик', body: '<path d="M1 1.500h10M1 3.500h10M1 5.500h10M1 7.500h10M1 9.500h10" stroke="#777"/>' }
]

const apps = [
  { label: 'Пуск', body: '<path d="M4 6l7-1v6.500H4zM12 4.900l8-1.100v7.700h-8zM4 12.500h7V19l-7-1zM12 12.500h8v7.700L12 19.100z" fill="#fff"/>' },
  { label: 'Поиск', body: '<circle cx="14" cy="9.500" r="5.500" fill="none" stroke="#fff" stroke-width="1.400"/><path d="M10 13.500L4 20" stroke="#fff" stroke-width="1.400"/>' },
  { label: 'Представление задач', body: '<path d="M4.500 7.500h10v8h-10zM4.500 5V4M4.500 4.500h10V4M4.500 19v-1.500h10V19M18.500 4v3M18.500 13v7" fill="none" stroke="#fff"/><path d="M17 8.500h3v3h-3z" fill="#fff"/>' },
  { label: 'Алиса', kind: 'wide', body: '<defs><linearGradient id="alice" x1="0" y1="1" x2="1" y2="0"><stop offset="0" stop-color="#b94cf0"/><stop offset="1" stop-color="#6a6cff"/></linearGradient></defs><circle cx="12" cy="12" r="12" fill="url(#alice)"/><path d="M12 5.500c2.500 0 6.500 6.500 6.500 9 0 3.500-13 3.500-13 0 0-2.500 4-9 6.500-9z" fill="#fff"/>' },
  { label: 'Проводник', state: 'running', body: '<path d="M1.500 4h8l2 2.500H22v14H1.500z" fill="#f4c64c"/><path d="M1.500 8H23v12.500H1.500z" fill="#fbe08c"/><path d="M6 21v-8h13v8h-4v-4h-5v4z" fill="#3ba6dd"/>' },
  { label: 'Excel', body: '<rect x="1.500" y="1.500" width="20" height="20" rx="1.500" fill="#e8f4e6" stroke="#4b9b48"/><path d="M4.500 5l8 12M12.500 5l-8 12" stroke="#238336" stroke-width="3.200"/><path d="M11 13.500l10-2 2 9-10 2z" fill="#f3fbf2" stroke="#65a762"/><path d="M13 16l8-1.500M13.500 19l8-1.500M16 13l1.500 8" stroke="#78b675"/>' },
  { label: 'Chrome', body: '<circle cx="12.500" cy="12.500" r="10.800" fill="#fbd24b"/><path d="M3.200 7A10.800 10.800 0 0 1 22 7.500h-9.500L8 15z" fill="#e04a3b"/><path d="M3.200 7a10.800 10.800 0 0 0 8.800 16.300l5-8.300-9 0z" fill="#2ea456"/><circle cx="12.500" cy="12.500" r="5.200" fill="#f5f5f5"/><circle cx="12.500" cy="12.500" r="4.200" fill="#4688ea"/>' },
  { label: 'Word', state: 'running current', body: '<rect x="1.500" y="1.500" width="20" height="20" rx="1.500" fill="#e9f1fb" stroke="#5d8dcb"/><path d="M3.500 5L6 16.500l4-10 3.500 10L17.500 5" fill="none" stroke="#1f58ae" stroke-width="3.200"/><path d="M12 16l10-4 1 9-9 1z" fill="#f4f8fd" stroke="#7fa1d0"/><path d="M14 17.500l7-2.500M14 20l8-2" stroke="#8aa9d4"/>' },
  { label: 'Яндекс', state: 'running', body: '<circle cx="12" cy="12" r="11.300" fill="#f2f2f2"/><path d="M7 5l5 7.500L17 5M12 12v8" fill="none" stroke="#d91f26" stroke-width="2.600"/>' },
  { label: 'Paint', body: '<path d="M1 15C0 8 7 4 14 5c6 1 9 5 7 9-2 5-7 8-12 8-3 0-3-2-2-4 0-2-5 1-6-3z" fill="#bfe0f3" stroke="#83b4d2"/><circle cx="5" cy="12" r="2" fill="#d94a3a"/><circle cx="9" cy="8.500" r="2" fill="#f0c33c"/><circle cx="14" cy="8" r="2" fill="#5bb04f"/><circle cx="11" cy="17" r="1.700" fill="#0b1018"/><path d="M20 3L14 22" stroke="#cf8a3c" stroke-width="2.600"/><path d="M18 6l1-4 4-2-.5 4.500-2 3z" fill="#b79a80"/>' }
]
</script>

<style>
html,
body {
  background: #c6c9ce;
}
</style>

<style scoped>
.word {
  display: flex;
  flex-direction: column;
  height: 100vh;
  overflow: hidden;
  font-family: 'Noto Sans', 'Open Sans', sans-serif;
  font-size: 11px;
  line-height: 16px;
  color: #3b3b3b;
}

button {
  display: flex;
  align-items: center;
  justify-content: center;
  padding: 0;
  border: 0;
  background: none;
  font: inherit;
  color: inherit;
}

svg {
  display: block;
  flex: none;
}

.word :deep(.arrow) {
  flex: none;
  width: 0;
  height: 0;
  border: 3px solid transparent;
  border-top-color: #666;
  border-bottom: 0;
}

.word .arrow.up {
  border-top: 0;
  border-bottom: 3px solid #666;
}

.word .arrow.pale {
  border-bottom-color: #bbb;
}

.word .arrow.dark {
  border-width: 5px;
  border-top-color: #444;
  border-bottom: 0;
}

.word .arrow.dark.up {
  border-top: 0;
  border-bottom: 5px solid #444;
}

.word .arrow.blue {
  border-width: 5px;
  border-top-color: #8f9dc0;
  border-bottom: 0;
}

.word .arrow.blue.up {
  border-top: 0;
  border-bottom: 5px solid #8f9dc0;
}

/* заголовок окна */
.titlebar {
  display: flex;
  flex: none;
  height: 24px;
  background: #fff;
}

.quick {
  display: flex;
  align-items: center;
  width: 119px;
}

.quick-sep {
  width: 1px;
  height: 12px;
  margin: 0 7px 0 4px;
  background: #999;
}

.quick-sep.end {
  margin: 0 4px 0 7px;
}

.quick .undo {
  margin: 0 7px;
}

.caption {
  flex: 1;
  margin-top: 1px;
  margin-right: 3px;
  padding-left: 30px;
  border-left: 1px solid #888;
  background: linear-gradient(#ff1d1d, #e80c0c 60%, #dc0000);
  color: #300;
  line-height: 24px;
  text-align: center;
}

.window-buttons {
  display: flex;
  box-sizing: border-box;
  width: 146px;
  padding: 4px 2px 0 8px;
}

.window-buttons button {
  flex: 1;
}

/* вкладки */
.tabs {
  display: flex;
  flex: none;
  height: 25px;
  padding-right: 3px;
  background: #fff;
  box-shadow: inset 0 -1px #b3b8bf;
}

.file-tab {
  width: 56px;
  margin: 1px 4px 0 0;
  border-radius: 3px 3px 0 0;
  background: linear-gradient(#2c62b0, #2a63b8 50%, #4080d8);
  color: #fff;
}

.tab {
  padding: 0 13px 0 14px;
}

.tab.current {
  margin-top: 1px;
  padding: 0 12px;
  border: 1px solid #b3b8bf;
  border-bottom: 0;
  border-radius: 3px 3px 0 0;
  background: #fff;
}

.tabs-fill {
  flex: 1;
}

.help {
  margin-left: 8px;
}

/* лента */
.ribbon {
  display: flex;
  flex: none;
  height: 85px;
  border-bottom: 2px solid #8e9299;
  background: linear-gradient(#fff, #fbfcfc 50%, #e5e8ec);
}

.group {
  display: flex;
  flex: none;
  flex-direction: column;
  box-sizing: border-box;
  border-right: 1px solid #cfd3d9;
  box-shadow: 1px 0 #fff;
}

.clipboard {
  width: 190px;
}

.font {
  width: 269px;
}

.paragraph {
  width: 228px;
}

.styles {
  width: 447px;
}

.editing {
  width: 95px;
}

.group-body {
  display: flex;
  height: 69px;
}

.group-name {
  display: flex;
  align-items: center;
  padding: 0 5px;
  color: #6b7079;
}

.group-name span {
  flex: 1;
  text-align: center;
  white-space: nowrap;
}

.clipboard .group-name,
.font .group-name,
.paragraph .group-name,
.styles .group-name {
  padding-right: 4px;
  padding-left: 0;
}

.editing .group-name {
  padding: 0;
}

.big {
  flex: none;
  flex-direction: column;
  justify-content: flex-start;
  line-height: 13px;
}

.paste {
  width: 59px;
  padding-top: 4px;
  gap: 4px;
}

.change {
  width: 60px;
  padding-top: 5px;
}

.change > span:first-of-type {
  margin-top: 6px;
}

.with-arrow {
  display: flex;
  align-items: center;
  gap: 3px;
}

.stack {
  display: flex;
  flex-direction: column;
  align-items: flex-start;
  padding-top: 2px;
}

.stack button {
  height: 22px;
  gap: 3px;
  white-space: nowrap;
}

.stack .arrow {
  margin-left: 2px;
}

.editing .stack {
  padding-left: 8px;
}

.off {
  color: #9b9b9b;
}

.rows {
  flex-direction: column;
  gap: 7px;
  padding: 10px 0 0 5px;
}

.row {
  display: flex;
  height: 22px;
}

.combo {
  display: flex;
  align-items: center;
  box-sizing: border-box;
  height: 22px;
  padding-right: 4px;
  border: 1px solid #c9cdd2;
  background: #fff;
}

.combo select {
  flex: 1;
  min-width: 0;
  height: 20px;
  padding: 0 3px 0 2px;
  border: 0;
  appearance: none;
  background: none;
  font: inherit;
  color: #111;
  text-overflow: clip;
}

.family {
  width: 86px;
}

.size {
  width: 54px;
}

.row :deep(.tool) {
  display: flex;
  align-items: center;
  justify-content: center;
  gap: 4px;
  box-sizing: border-box;
  height: 22px;
  padding: 0;
  border: 0;
  background: none;
}

.row :deep(.tool.on) {
  border: 1px solid #c49a3c;
  border-radius: 3px;
  background: linear-gradient(#fcdf8a, #fdd764 50%, #ffee8c);
}

.row :deep(.tool-sep) {
  height: 22px;
  background: linear-gradient(#fff, #c4c8ce, #fff) center / 1px 100% no-repeat;
}

.gallery {
  display: flex;
  flex: none;
  box-sizing: border-box;
  width: 378px;
  height: 60px;
  margin: 5px 0 0 6px;
  border: 1px solid #c3c8ce;
  background: #fff;
}

.style {
  flex-direction: column;
  align-items: stretch;
  justify-content: flex-start;
  flex: 1;
  min-width: 0;
  box-sizing: border-box;
  padding: 10px 5px 0;
  border: 2px solid transparent;
}

.sample {
  height: 22px;
  overflow: hidden;
  font-family: 'Liberation Serif', serif;
  font-size: 16px;
  line-height: 22px;
  color: #000;
  text-align: left;
  white-space: nowrap;
}

.large .sample {
  font-size: 18px;
}

.bold .sample {
  font-size: 19px;
  font-weight: bold;
}

.heading .sample {
  font-family: 'Liberation Sans', sans-serif;
  font-size: 19px;
  font-weight: bold;
}

.style-name {
  margin: 2px -5px 0;
  text-align: center;
  white-space: nowrap;
}

.picked {
  border: 2px solid #d09a35;
  border-radius: 2px;
  box-shadow: inset 0 0 0 2px #fde27c;
}

.gallery-scroll {
  display: flex;
  flex-direction: column;
  width: 15px;
  border-left: 1px solid #c3c8ce;
}

.gallery-scroll button {
  flex: 1;
}

.gallery-scroll button + button {
  border-top: 1px solid #c3c8ce;
}

/* рабочая область */
.workspace {
  display: flex;
  flex: 1;
  min-height: 0;
  background: linear-gradient(#cdd0d5, #b8bbc0);
}

.navigation {
  display: flex;
  flex: none;
  flex-direction: column;
  box-sizing: border-box;
  width: 206px;
  margin-top: 2px;
  padding: 2px 7px;
  border: 1px solid #9297a0;
  background: #e8ebf0;
}

.nav-title {
  display: flex;
  align-items: center;
  justify-content: space-between;
  height: 18px;
  margin: 0 -4px;
  padding: 0 2px 0 1px;
  background: #cbd2da;
}

.search {
  display: flex;
  align-items: center;
  box-sizing: border-box;
  height: 22px;
  margin-top: 6px;
  padding-right: 3px;
  border: 1px solid #d0d4d9;
  background: #fff;
  gap: 7px;
}

.search input {
  flex: 1;
  min-width: 0;
  padding: 0 2px;
  border: 0;
  outline: none;
  background: none;
  font: inherit;
}

.search input::placeholder {
  color: #6d6d6d;
}

.nav-tabs {
  display: flex;
  height: 25px;
  margin-top: 8px;
}

.nav-tabs button {
  box-sizing: border-box;
  width: 26px;
  border: 1px solid #bcc1c8;
  border-left-width: 0;
}

.nav-tabs .active {
  width: 27px;
  border-left-width: 1px;
  border-bottom-color: #fff;
  background: #fff;
}

.nav-arrows {
  flex: 1;
  display: flex;
  align-items: center;
  justify-content: flex-end;
  padding: 0 6px 4px 0;
  border-bottom: 1px solid #bcc1c8;
}

.nav-list {
  display: flex;
  flex: 1;
  min-height: 0;
  border: 1px solid #bcc1c8;
  border-top-width: 0;
  background: #fff;
}

.nav-list ul {
  flex: 1;
  min-width: 0;
  margin: 0;
  padding: 12px 3px 0;
  list-style: none;
}

.outline {
  display: flex;
  align-items: center;
  box-sizing: border-box;
  height: 22px;
  margin-top: -1px;
  border: 1px solid #d3d5d9;
  border-radius: 4px;
  background: linear-gradient(#fff, #f3f5f6);
  white-space: nowrap;
}

.outline.top {
  justify-content: center;
}

.outline.sub {
  margin-left: 16px;
}

.outline.here {
  position: relative;
  border-color: #c0902f;
  background: linear-gradient(#fee28c, #ffd25e 50%, #ffe97c);
}

.toggle {
  flex: none;
  box-sizing: border-box;
  width: 18px;
  padding-left: 6px;
}

.nav-scroll {
  display: flex;
  flex-direction: column;
  justify-content: space-between;
  width: 17px;
  background: linear-gradient(90deg, #eee, #fcfcfc);
}

.nav-scroll button {
  box-sizing: border-box;
  width: 15px;
  height: 17px;
  margin-left: 1px;
  border: 1px solid #b3b8c0;
  background: #f0f2f5;
}

.vruler {
  display: flex;
  flex: none;
  flex-direction: column;
  align-items: center;
  width: 24px;
}

.tab-kind {
  flex: none;
  margin: 2px 0 1px;
  padding: 3px;
  border: 1px solid #9ba0a7;
}

.vscale {
  flex: 1;
  width: 12px;
  overflow: hidden;
  border: solid #8c9299;
  border-width: 0 1px;
  background: #f6f7f8;
}

.vscale path,
.hruler path {
  stroke: #555;
}

.vscale text,
.hruler text {
  font-size: 10px;
  fill: #555;
}

.hruler svg {
  overflow: visible;
}

.hruler .marker {
  fill: #f1f1f1;
  stroke: #777;
}

.document {
  display: flex;
  flex: 1;
  flex-direction: column;
  min-width: 0;
}

.hruler {
  display: flex;
  flex: none;
  justify-content: center;
  height: 26px;
}

.viewport {
  display: flex;
  flex: 1;
  justify-content: center;
  min-height: 0;
  overflow: hidden;
}

.page {
  box-sizing: border-box;
  width: 712px;
  padding: 0 46px 0 102px;
  background: #fff;
  box-shadow: 0 0 12px 2px #72767c;
  font-family: 'Liberation Serif', serif;
  font-size: 17px;
  line-height: 29px;
  color: #000;
}

.para {
  margin: 0;
}

.para:first-child {
  margin-top: -12px;
}

.line {
  display: flex;
  white-space: nowrap;
}

.line.last {
  padding-right: 4px;
}

.line.indent {
  padding-left: 42px;
}

.run {
  flex: none;
}

.dot {
  flex: 1 1 4px;
  min-width: 1px;
}

.dot:last-child {
  flex: none;
}

.figure {
  display: flex;
  align-items: flex-end;
  padding: 3px 0 3px 37px;
}

.figure text {
  font-size: 11px;
  font-weight: bold;
  fill: #222;
}

.pilcrow {
  line-height: 14px;
}

.page-number {
  margin-top: 9px;
  padding-left: 2px;
  font-size: 14px;
  color: #808080;
  text-align: center;
}

.vscroll {
  display: flex;
  flex: none;
  flex-direction: column;
  align-items: center;
  width: 17px;
  padding-top: 6px;
  box-sizing: border-box;
  background: #dde2e9;
}

.split {
  flex: none;
  width: 9px;
  height: 2px;
  background: #777;
}

.ruler-toggle {
  box-sizing: border-box;
  width: 17px;
  height: 17px;
  margin-top: 2px;
  border: 1px solid #8c9299;
}

.step {
  height: 17px;
}

.track {
  flex: 1;
  padding-top: 81px;
}

.thumb {
  display: block;
  box-sizing: border-box;
  width: 16px;
  height: 17px;
  border: 1px solid #8a929c;
  background: repeating-linear-gradient(#8b9097 0 1px, transparent 1px 2px) center / 8px 7px no-repeat, #f3f5f7;
}

.browse {
  height: 17px;
}

/* строка состояния */
.status {
  display: flex;
  flex: none;
  align-items: center;
  box-sizing: border-box;
  height: 22px;
  padding-right: 4px;
  border-top: 1px solid #8f949b;
  background: linear-gradient(#e6e8eb, #cfd2d6 50%, #b9bdc2);
}

.cell {
  display: flex;
  align-items: center;
  box-sizing: border-box;
  height: 20px;
  padding-left: 8px;
  border-right: 1px solid #8f949b;
  white-space: nowrap;
}

.pages {
  width: 112px;
}

.count {
  width: 117px;
  padding-left: 9px;
}

.language {
  width: 93px;
  gap: 15px;
}

.status-fill {
  flex: 1;
}

.views {
  display: flex;
  padding-left: 4px;
  border-left: 1px solid #8f949b;
}

.views button {
  box-sizing: border-box;
  width: 18px;
  height: 19px;
}

.views .on {
  border: 1px solid #c49a3c;
  border-radius: 2px;
  background: #fde08a;
}

.percent {
  width: 29px;
  margin-left: 10px;
}

.zoom {
  width: 100px;
  height: 16px;
  margin: 0;
  appearance: none;
  background: linear-gradient(#7c828a, #7c828a) center / 100% 1px no-repeat;
}

.zoom::-webkit-slider-thumb {
  appearance: none;
  width: 9px;
  height: 12px;
  border: 1px solid #666c74;
  border-radius: 1px 1px 5px 5px;
  background: #f8f8f8;
}

/* панель задач */
.taskbar {
  display: flex;
  flex: none;
  align-items: center;
  height: 40px;
  background: #060a12;
  color: #fff;
}

.app {
  width: 48px;
  height: 40px;
}

.app.wide {
  width: 64px;
}

.app.wide ~ .app {
  margin-right: 1px;
}

.running {
  background: linear-gradient(#76b9ed, #76b9ed) center bottom / 40px 2px no-repeat;
}

.running.current {
  background-color: #3a3d44;
  background-size: 48px 2px;
}

.task-fill {
  flex: 1;
}

.tray {
  width: 24px;
}

.people {
  margin-right: 12px;
}

.lang {
  width: 36px;
  text-align: center;
}

.clock {
  display: flex;
  flex-direction: column;
  width: 66px;
  line-height: 18px;
  text-align: center;
}

.notes {
  width: 40px;
}

.peek {
  width: 1px;
  height: 40px;
  margin: 0 4px 0 7px;
  background: #555;
}
</style>
